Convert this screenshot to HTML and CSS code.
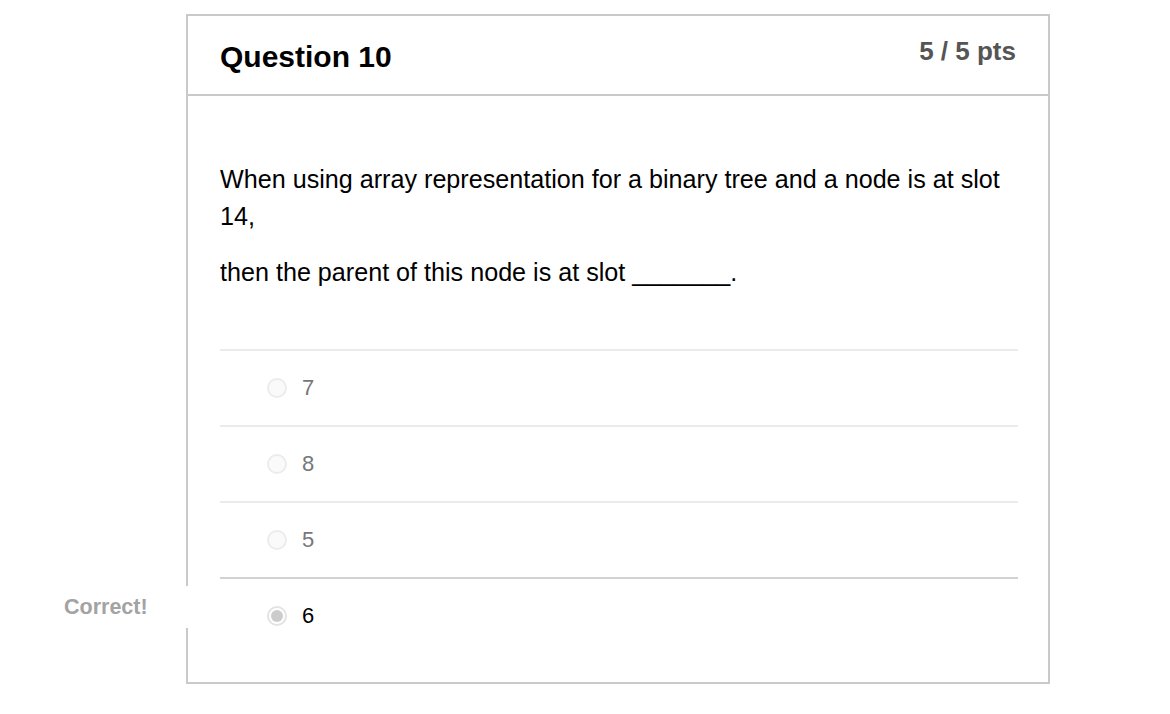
FILE: index.html
```html
<!DOCTYPE html>
<html lang="en">
<head>
    <meta charset="UTF-8">
    <title>Question 10</title>
    <link rel="stylesheet" href="styles.css">
</head>
<body>
    <div class="question">
        <div class="question-header">
            <h2 class="question-title">Question 10</h2>
            <span class="question-points">5 / 5 pts</span>
        </div>

        <div class="question-body">
            <p class="question-text">When using array representation for a binary tree and a node is at slot 14,</p>
            <p class="question-text last">then the parent of this node is at slot _______.</p>

            <div class="answers">
                <label class="answer">
                    <span class="radio"></span>
                    <span class="answer-text">7</span>
                </label>
                <label class="answer">
                    <span class="radio"></span>
                    <span class="answer-text">8</span>
                </label>
                <label class="answer">
                    <span class="radio"></span>
                    <span class="answer-text">5</span>
                </label>
                <label class="answer selected">
                    <span class="answer-flag">Correct!</span>
                    <span class="radio checked"></span>
                    <span class="answer-text">6</span>
                </label>
            </div>
        </div>
    </div>
</body>
</html>
```

FILE: styles.css
```css
body {
    font-family: "Liberation Sans", Arial, sans-serif;
    background-color: #ffffff;
    margin: 0;
    color: #000000;
}
.question {
    margin: 14px 0 0 186px;
    width: 864px;
    box-sizing: border-box;
    border: 2px solid #c9c9c9;
}
.question-header {
    height: 80px;
    box-sizing: border-box;
    border-bottom: 2px solid #c9c9c9;
    padding: 23px 32px 0 32px;
    display: flex;
    justify-content: space-between;
    align-items: flex-start;
}
.question-title {
    margin: 0;
    font-size: 30px;
    line-height: 36px;
    font-weight: bold;
}
.question-points {
    margin-top: -4px;
    font-size: 26px;
    line-height: 32px;
    font-weight: bold;
    color: #555555;
}
.question-body {
    padding: 65px 30px 29px 32px;
}
.question-text {
    margin: 0 0 19px;
    font-size: 25.15px;
    line-height: 37px;
}
.question-text.last {
    margin-bottom: 0;
}
.answers {
    margin-top: 58px;
}
.answer {
    position: relative;
    height: 76px;
    box-sizing: border-box;
    border-top: 2px solid #ebebeb;
    padding-left: 47px;
    display: flex;
    align-items: center;
    gap: 15px;
    font-size: 22px;
    color: #777777;
}
.answer.selected {
    border-top-color: #d2d2d2;
    color: #000000;
}
.radio {
    width: 20px;
    height: 20px;
    box-sizing: border-box;
    border: 2px solid #ececec;
    border-radius: 50%;
    background-color: #fafafa;
    display: flex;
    align-items: center;
    justify-content: center;
}
.radio.checked {
    border-color: #e3e3e3;
    background-color: #ffffff;
}
.radio.checked::after {
    content: "";
    width: 12px;
    height: 12px;
    border-radius: 50%;
    background-color: #cccccc;
}
.answer-flag {
    position: absolute;
    left: -158px;
    top: 7px;
    width: 128px;
    height: 42px;
    line-height: 42px;
    padding-left: 2px;
    background-color: #ffffff;
    font-size: 21.5px;
    font-weight: bold;
    color: #a3a3a3;
}
```
